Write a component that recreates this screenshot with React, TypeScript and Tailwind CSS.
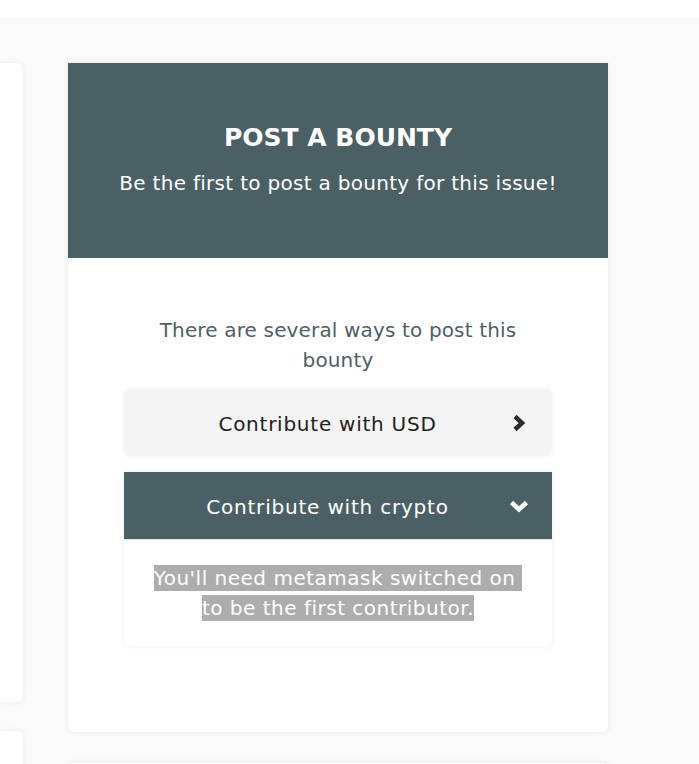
import React from 'react';

const font = { fontFamily: '"DejaVu Sans", "Open Sans", sans-serif' };

const ChevronRight = () => (
    <svg width="16" height="18" viewBox="0 0 16 18" className="absolute right-[25px] top-[25px]">
        <path d="M4 2.5 L11 9 L4 15.5" fill="none" stroke="#2b2b2b" strokeWidth="4.5" strokeLinejoin="miter" />
    </svg>
);

const ChevronDown = () => (
    <svg width="20" height="16" viewBox="0 0 20 16" className="absolute right-[23px] top-[27px]">
        <path d="M2.5 3.5 L10 10.5 L17.5 3.5" fill="none" stroke="#ffffff" strokeWidth="4.5" strokeLinejoin="miter" />
    </svg>
);

const App: React.FC = () => {
    return (
        <div className="min-h-[764px] bg-white" style={font}>
            <div className="h-[17px] bg-white" />
            <div className="flex h-[747px] gap-[45px] overflow-hidden bg-[#fafafa] pt-[46px]">
                {/* left column (cut off) */}
                <div className="flex w-[23px] shrink-0 flex-col gap-[29px]">
                    <div className="h-[639px] shrink-0 rounded-r-md bg-white shadow-[0_0_6px_rgba(0,0,0,0.07)]" />
                    <div className="h-[60px] shrink-0 rounded-r-md bg-white shadow-[0_0_6px_rgba(0,0,0,0.07)]" />
                </div>

                {/* bounty column */}
                <div className="flex w-[540px] shrink-0 flex-col gap-[31px]">
                    <div className="shrink-0 overflow-hidden rounded-b-md bg-white shadow-[0_0_6px_rgba(0,0,0,0.07)]">
                        <div className="flex h-[195px] flex-col items-center bg-[#4a6064] pt-[60px] text-white">
                            <h2 className="text-[25px] font-bold leading-[30px]">POST A BOUNTY</h2>
                            <p className="mt-[17px] text-[20px] leading-[26px] tracking-[0.3px]">Be the first to post a bounty for this issue!</p>
                        </div>

                        <div className="px-[56px] pt-[57px] pb-[86px]">
                            <p className="px-8 text-center text-[20px] leading-[30px] tracking-[0.15px] text-[#4f5f66]">
                                There are several ways to post this bounty
                            </p>

                            <button className="relative mt-[14px] flex h-[67px] w-full items-center justify-center rounded-md bg-[#f4f4f4] pt-[3px] pr-[21px] shadow-[0_0_5px_rgba(0,0,0,0.06)]">
                                <span className="text-[20px] tracking-[0.75px] text-[#222]">Contribute with USD</span>
                                <ChevronRight />
                            </button>

                            <div className="mt-[16px] overflow-hidden rounded-b-md bg-white shadow-[0_0_6px_rgba(0,0,0,0.08)]">
                                <div className="relative flex h-[68px] items-center justify-center border-b border-[#dfe3e4] bg-[#4a6064] pt-[3px] pr-[21px]">
                                    <span className="text-[20px] tracking-[0.8px] text-white">Contribute with crypto</span>
                                    <ChevronDown />
                                </div>
                                <div className="px-[20px] pt-[23px] pb-[23px] text-center text-[20px] leading-[30px] tracking-[0.5px] text-white">
                                    <span className="bg-[#adadad] py-[1px]">
                                        You'll need metamask switched on{'\u00a0'}
                                        <br />
                                        to be the first contributor.
                                    </span>
                                </div>
                            </div>
                        </div>
                    </div>

                    <div className="h-[60px] shrink-0 rounded-t-md bg-white shadow-[0_0_6px_rgba(0,0,0,0.07)]" />
                </div>
            </div>
        </div>
    );
};

export default App;
